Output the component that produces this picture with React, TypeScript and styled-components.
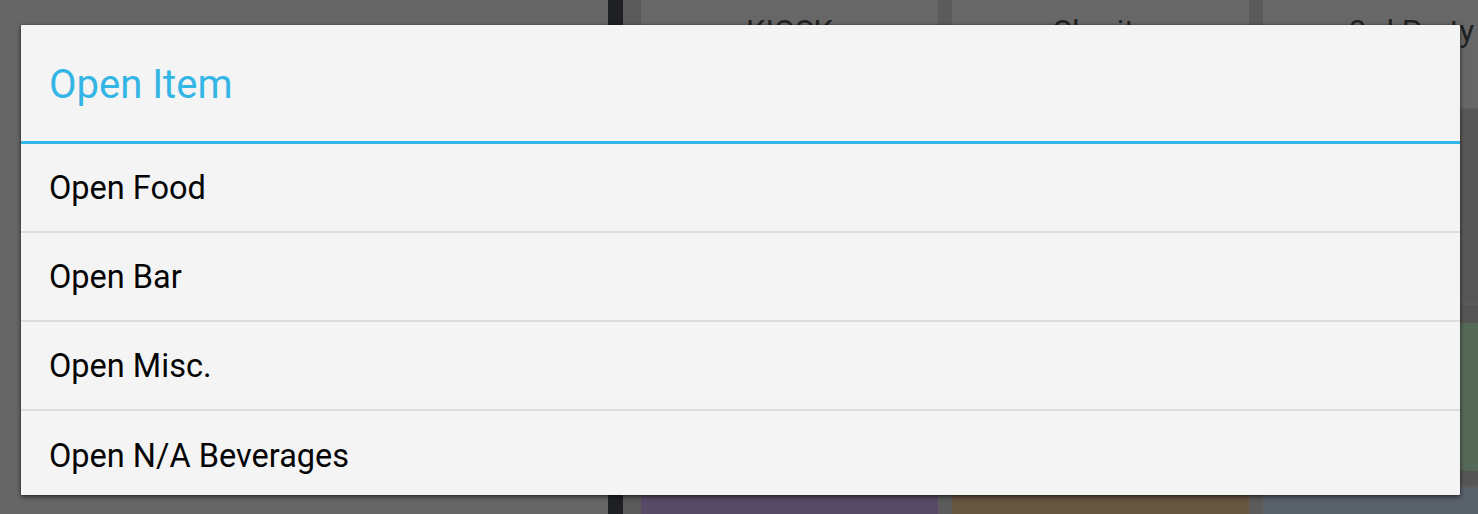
import React from "react";
import styled, { createGlobalStyle } from "styled-components";

const GlobalStyle = createGlobalStyle`
  html, body {
    margin: 0;
    padding: 0;
    width: 1478px;
    height: 514px;
    overflow: hidden;
    background: #666666;
    font-family: Roboto, "Noto Sans", "Liberation Sans", sans-serif;
  }
  * { box-sizing: border-box; }
`;

const Screen = styled.div`
  position: relative;
  width: 1478px;
  height: 514px;
  overflow: hidden;
  display: flex;
  background: #666666;
`;

const LeftPane = styled.div`
  width: 608px;
  flex: none;
  background: #666666;
`;

const SplitBar = styled.div`
  width: 15px;
  flex: none;
  background: #1f2024;
`;

const Gutter = styled.div`
  width: 18px;
  flex: none;
  background: #5a5a5a;
`;

const TileGrid = styled.div`
  flex: none;
  display: grid;
  grid-template-columns: repeat(3, 297px);
  grid-template-rows: 108px 193px 180px 40px;
  column-gap: 14px;
  row-gap: 2px;
  background: #5b5b5b;
`;

const Tile = styled.div<{ $bg: string }>`
  background: ${(p) => p.$bg};
  display: flex;
  justify-content: center;
  align-items: flex-start;
`;

const SplitTile = styled.div`
  background: #555555;
  display: flex;
  flex-direction: column;
  padding: 18px 0 14px;
`;

const TileFill = styled.div<{ $bg: string }>`
  flex: 1;
  background: ${(p) => p.$bg};
`;

const TileLabel = styled.span`
  font-size: 31px;
  line-height: 36px;
  margin-top: 14px;
  color: #222222;
`;

const Dialog = styled.div`
  position: absolute;
  left: 21px;
  top: 25px;
  width: 1439px;
  height: 470px;
  background: #f4f4f4;
  overflow: hidden;
  border-radius: 1px;
  box-shadow: 0 2px 5px rgba(0, 0, 0, 0.55), 0 0 2px rgba(0, 0, 0, 0.35);
  display: flex;
  flex-direction: column;
`;

const TitleBar = styled.div`
  height: 119px;
  flex: none;
  display: flex;
  align-items: center;
  padding: 2px 0 0 28px;
  border-bottom: 3px solid #33b5e5;
`;

const Title = styled.h1`
  margin: 0;
  font-weight: 400;
  font-size: 40px;
  color: #33b5e5;
`;

const ItemList = styled.ul`
  list-style: none;
  margin: 0;
  padding: 0;
`;

const Item = styled.li`
  height: 89px;
  flex: none;
  display: flex;
  align-items: center;
  padding-left: 28px;
  font-size: 32.5px;
  color: #050505;
  border-bottom: 2px solid #dcdcdc;
  &:last-child {
    border-bottom: none;
  }
`;

const items = ["Open Food", "Open Bar", "Open Misc.", "Open N/A Beverages"];

export default function App() {
  return (
    <>
      <GlobalStyle />
      <Screen>
        <LeftPane />
        <SplitBar />
        <Gutter />
        <TileGrid>
          <Tile $bg="#676767"><TileLabel>KIOSK</TileLabel></Tile>
          <Tile $bg="#676767"><TileLabel>Charity</TileLabel></Tile>
          <Tile $bg="#676767"><TileLabel>3rd Party</TileLabel></Tile>
          <Tile $bg="#585858" />
          <Tile $bg="#585858" />
          <Tile $bg="#575757" />
          <Tile $bg="#5a5a5a" />
          <Tile $bg="#5a5a5a" />
          <SplitTile><TileFill $bg="#566858" /></SplitTile>
          <Tile $bg="#574a66" />
          <Tile $bg="#66553f" />
          <Tile $bg="#59616b" />
        </TileGrid>
        <Dialog>
          <TitleBar>
            <Title>Open Item</Title>
          </TitleBar>
          <ItemList>
            {items.map((t) => (
              <Item key={t}>{t}</Item>
            ))}
          </ItemList>
        </Dialog>
      </Screen>
    </>
  );
}
